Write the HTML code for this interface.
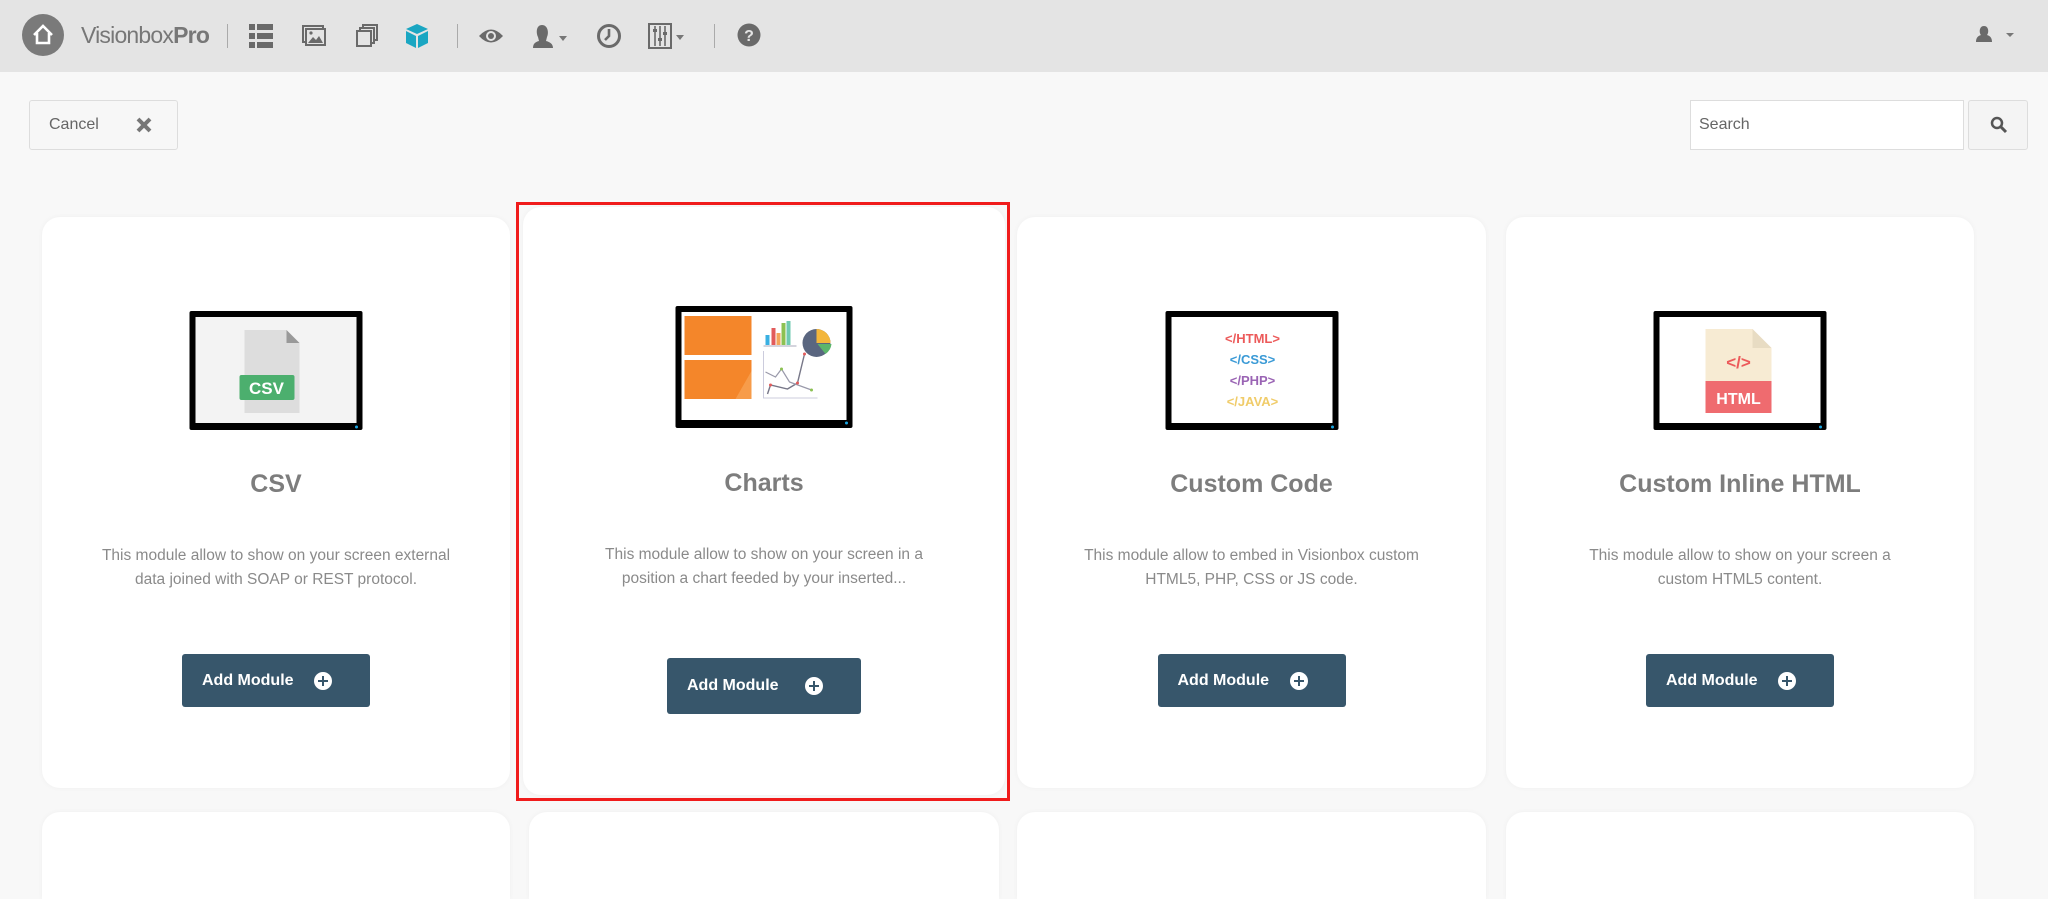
<!DOCTYPE html>
<html><head><meta charset="utf-8"><style>
*{box-sizing:border-box;margin:0;padding:0}
html{width:2048px;height:899px;overflow:hidden}
body{width:2048px;height:899px;overflow:hidden;background:#f8f8f8;font-family:"Liberation Sans",sans-serif;position:relative;color:#777}
.hdr{position:absolute;left:0;top:0;width:2048px;height:72px;background:#e4e4e4}
.abs{position:absolute}
.sep{position:absolute;top:24px;width:1px;height:24px;background:#aaa}
.card{position:absolute;background:#fff;border-radius:18px;box-shadow:0 0 6px rgba(0,0,0,.04)}
.card svg{position:absolute;left:50%;transform:translateX(-50%)}
.title{position:absolute;width:100%;text-align:center;font-size:25px;font-weight:bold;color:#7d7d7d}
.desc{position:absolute;width:100%;text-align:center;font-size:15.5px;line-height:24px;color:#8a8a8a}
.btn{position:absolute;left:50%;transform:translateX(-50%);width:188px;height:53px;background:#37566b;border-radius:3px;color:#fff;font-weight:bold;font-size:16px;line-height:53px;padding-left:20px}
.btn i{position:absolute;right:38px;top:18px;width:18px;height:18px;border-radius:50%;background:#fff}
.btn i:before,.btn i:after{content:"";position:absolute;background:#37566b;left:4px;top:8px;width:10px;height:2px}
.btn i:after{left:8px;top:4px;width:2px;height:10px}
.r2{border-radius:18px 18px 0 0;height:87px}
</style></head><body>
<div class="hdr">
 <div class="abs" style="left:22px;top:14px;width:42px;height:42px;border-radius:50%;background:#7a7a7a"></div>
 <svg class="abs" style="left:30px;top:22px" width="26" height="26" viewBox="0 0 26 26"><path d="M4 13 L13 4 L22 13 M7 11 V21 H19 V11" fill="none" stroke="#fff" stroke-width="2.6"/></svg>
 <div class="abs" style="left:81px;top:22px;font-size:23px;color:#777;letter-spacing:-.8px">Visionbox<b>Pro</b></div>
 <div class="sep" style="left:227px"></div><div class="sep" style="left:457px"></div><div class="sep" style="left:714px"></div>
 <svg class="abs" style="left:249px;top:24px" width="24" height="24"><g fill="#6a6a6a"><rect x="0" y="0" width="6" height="6"/><rect x="8" y="0" width="16" height="6"/><rect x="0" y="9" width="6" height="6"/><rect x="8" y="9" width="16" height="6"/><rect x="0" y="18" width="6" height="6"/><rect x="8" y="18" width="16" height="6"/></g></svg>
 <svg class="abs" style="left:302px;top:25px" width="24" height="22"><rect x="1" y="1" width="20" height="16" fill="none" stroke="#6a6a6a" stroke-width="2"/><rect x="4" y="4" width="19" height="16" fill="#e4e4e4" stroke="#6a6a6a" stroke-width="2"/><path d="M6 18 L11 12 L14 15 L17 11 L21 18Z" fill="#6a6a6a"/><circle cx="9" cy="8" r="1.6" fill="#6a6a6a"/></svg>
 <svg class="abs" style="left:356px;top:24px" width="24" height="24"><rect x="7" y="1" width="14" height="15" fill="none" stroke="#6a6a6a" stroke-width="2"/><rect x="4" y="4" width="14" height="15" fill="#e4e4e4" stroke="#6a6a6a" stroke-width="2"/><rect x="1" y="7" width="14" height="15" fill="#e4e4e4" stroke="#6a6a6a" stroke-width="2"/></svg>
 <svg class="abs" style="left:406px;top:24px" width="22" height="24"><path d="M11 0 L22 5 L11 10 L0 5Z" fill="#1aa6c2"/><path d="M0 7 L10 12 V24 L0 19Z M22 7 L12 12 V24 L22 19Z" fill="#1aa6c2"/></svg>
 <svg class="abs" style="left:478px;top:27px" width="26" height="18"><path d="M1 9 Q13 -4 25 9 Q13 22 1 9Z" fill="#6a6a6a"/><circle cx="13" cy="9" r="5" fill="#e4e4e4"/><circle cx="13" cy="9" r="3" fill="#6a6a6a"/></svg>
 <svg class="abs" style="left:532px;top:24px" width="38" height="26"><path d="M10 1 C4 1 4 9 6 13 L7 17 C3 18 1 20 1 24 H21 C21 20 18 18 14 17 L15 13 C17 9 16 1 10 1Z" fill="#6a6a6a"/><path d="M27 12 L35 12 L31 17Z" fill="#777"/></svg>
 <svg class="abs" style="left:596px;top:23px" width="26" height="26"><circle cx="13" cy="13" r="10.5" fill="none" stroke="#6a6a6a" stroke-width="3"/><path d="M13 6 V13 L9 17" fill="none" stroke="#6a6a6a" stroke-width="2.6"/></svg>
 <svg class="abs" style="left:648px;top:23px" width="40" height="26"><rect x="1" y="1" width="22" height="24" fill="none" stroke="#6a6a6a" stroke-width="2"/><g stroke="#6a6a6a" stroke-width="1.6"><path d="M7 3V23M12 3V23M17 3V23"/></g><g fill="#6a6a6a"><rect x="5" y="6" width="4" height="3"/><rect x="10" y="15" width="4" height="3"/><rect x="15" y="9" width="4" height="3"/></g><path d="M28 12 L36 12 L32 17Z" fill="#777"/></svg>
 <svg class="abs" style="left:737px;top:23px" width="24" height="24"><circle cx="12" cy="12" r="11.5" fill="#6a6a6a"/><text x="12" y="18" text-anchor="middle" font-family="Liberation Sans" font-weight="bold" font-size="16" fill="#e4e4e4">?</text></svg>
 <svg class="abs" style="left:1976px;top:26px" width="44" height="18"><path d="M8 0 C3 0 3 7 5 9 C1 10 0 13 0 16 H16 C16 13 15 10 11 9 C13 7 13 0 8 0Z" fill="#6a6a6a"/><path d="M30 7 L38 7 L34 11Z" fill="#777"/></svg>
</div>

<div class="abs" style="left:29px;top:100px;width:149px;height:50px;border:1px solid #ddd;border-radius:3px;background:#f7f7f7;font-size:16px;line-height:48px;padding-left:19px;color:#666">Cancel
 <svg class="abs" style="left:106px;top:16px" width="16" height="16"><path d="M2 2 L14 14 M14 2 L2 14" stroke="#777" stroke-width="4"/></svg></div>
<div class="abs" style="left:1690px;top:100px;width:274px;height:50px;border:1px solid #ddd;background:#fff;font-size:16px;line-height:48px;padding-left:8px;color:#666">Search</div>
<div class="abs" style="left:1968px;top:100px;width:60px;height:50px;border:1px solid #ddd;border-radius:3px;background:#f4f4f4">
 <svg class="abs" style="left:21px;top:15px" width="18" height="18"><circle cx="7" cy="7" r="5" fill="none" stroke="#555" stroke-width="2.5"/><path d="M11 11 L16 16" stroke="#555" stroke-width="3"/></svg></div>

<div class="card" style="left:42px;top:217px;width:468px;height:571px">
 <svg style="top:94px" width="173" height="119" viewBox="0 0 173 119"><rect x="0" y="0" width="173" height="119" rx="2" fill="#000"/><rect x="6" y="6" width="161" height="106" fill="#f3f3f3"/><path d="M55 19 H97 L110 32 V102 H55Z" fill="#ddd"/><path d="M97 19 L110 32 H97Z" fill="#999"/><rect x="50" y="64" width="55" height="25" rx="2" fill="#4caf6e"/><text x="77" y="83" text-anchor="middle" font-family="Liberation Sans" font-weight="bold" font-size="17" fill="#fff">CSV</text><circle cx="167" cy="116" r="1.5" fill="#1aa6e2"/></svg>
 <div class="title" style="top:253px">CSV</div>
 <div class="desc" style="top:327px">This module allow to show on your screen external<br>data joined with SOAP or REST protocol.</div>
 <div class="btn" style="top:437px">Add Module<i></i></div>
</div>
<div class="card" style="left:523px;top:207px;width:482px;height:588px">
 <svg style="top:99px" width="177" height="122" viewBox="0 0 177 122"><rect width="177" height="122" rx="2" fill="#000"/><rect x="6" y="6" width="165" height="108" fill="#fff"/><rect x="9" y="10" width="67" height="39" fill="#f4862a"/><rect x="9" y="54" width="67" height="39" fill="#f4862a"/><path d="M60 93 L76 65 V93Z" fill="#f79c4a"/><g><rect x="90" y="29" width="4" height="10" fill="#3ab0e2"/><rect x="96" y="22" width="4" height="17" fill="#e25b5b"/><rect x="101" y="27" width="4" height="12" fill="#f3a45b"/><rect x="106" y="17" width="4" height="22" fill="#8cc152"/><rect x="111" y="15" width="4" height="24" fill="#6fcab0"/></g><path d="M88 40 H121" stroke="#aab" stroke-width="1"/><path d="M88 45 V92 H142" stroke="#ccd" stroke-width="1" fill="none"/><path d="M92 88 L95 79 L112 83 L122 77 L129 48" fill="none" stroke="#778" stroke-width="1.4"/><path d="M90 66 L100 71 L106 63 L114 76 L136 84" fill="none" stroke="#99a" stroke-width="1.2"/><circle cx="95" cy="79" r="1.5" fill="#e25b5b"/><circle cx="129" cy="48" r="1.5" fill="#e25b5b"/><circle cx="122" cy="77" r="1.5" fill="#e25b5b"/><circle cx="106" cy="63" r="1.5" fill="#8cc152"/><circle cx="136" cy="84" r="1.5" fill="#8cc152"/><circle cx="141" cy="37" r="14" fill="#5a6680"/><path d="M141 37 V23 A14 14 0 0 1 155 37Z" fill="#f3b63b"/><path d="M142 38 H156 A14 14 0 0 1 150 48Z" fill="#5cb56b"/><circle cx="171" cy="117" r="1.5" fill="#1aa6e2"/></svg>
 <div class="title" style="top:262px">Charts</div>
 <div class="desc" style="top:336px">This module allow to show on your screen in a<br>position a chart feeded by your inserted...</div>
 <div class="btn" style="top:451px;width:194px;height:56px;line-height:56px">Add Module<i style="top:19px"></i></div>
</div>
<div class="abs" style="left:516px;top:202px;width:494px;height:599px;border:3px solid #f01c1c"></div>
<div class="card" style="left:1017px;top:217px;width:469px;height:571px">
 <svg style="top:94px" width="173" height="119" viewBox="0 0 173 119"><rect width="173" height="119" rx="2" fill="#000"/><rect x="6" y="6" width="161" height="106" fill="#fff"/><g font-family="Liberation Sans" font-weight="bold" font-size="13" text-anchor="middle"><text x="87" y="32" fill="#ec5a5a">&lt;/HTML&gt;</text><text x="87" y="53" fill="#3a9ad6">&lt;/CSS&gt;</text><text x="87" y="74" fill="#9a64b4">&lt;/PHP&gt;</text><text x="87" y="95" fill="#f0cc6a">&lt;/JAVA&gt;</text></g><circle cx="167" cy="116" r="1.5" fill="#1aa6e2"/></svg>
 <div class="title" style="top:253px">Custom Code</div>
 <div class="desc" style="top:327px">This module allow to embed in Visionbox custom<br>HTML5, PHP, CSS or JS code.</div>
 <div class="btn" style="top:437px">Add Module<i></i></div>
</div>
<div class="card" style="left:1506px;top:217px;width:468px;height:571px">
 <svg style="top:94px" width="173" height="119" viewBox="0 0 173 119"><rect width="173" height="119" rx="2" fill="#000"/><rect x="6" y="6" width="161" height="106" fill="#fff"/><path d="M52 18 H99 L118 37 V102 H52Z" fill="#f7ebd3"/><path d="M99 18 L118 37 H99Z" fill="#e8dcc3"/><text x="85" y="57" text-anchor="middle" font-family="Liberation Sans" font-weight="bold" font-size="17" fill="#ec5a5a">&lt;/&gt;</text><rect x="52" y="70" width="66" height="32" fill="#ef6b6f"/><text x="85" y="93" text-anchor="middle" font-family="Liberation Sans" font-weight="bold" font-size="16" fill="#fff">HTML</text><circle cx="167" cy="116" r="1.5" fill="#1aa6e2"/></svg>
 <div class="title" style="top:253px">Custom Inline HTML</div>
 <div class="desc" style="top:327px">This module allow to show on your screen a<br>custom HTML5 content.</div>
 <div class="btn" style="top:437px">Add Module<i></i></div>
</div>
<div class="card r2" style="left:42px;top:812px;width:468px"></div>
<div class="card r2" style="left:529px;top:812px;width:470px"></div>
<div class="card r2" style="left:1017px;top:812px;width:469px"></div>
<div class="card r2" style="left:1506px;top:812px;width:468px"></div>
</body></html>
